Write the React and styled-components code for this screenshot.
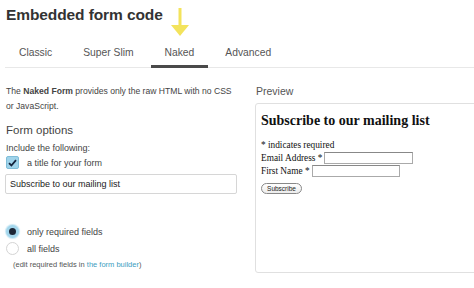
import React from 'react';
import styled, { createGlobalStyle } from 'styled-components';

const GlobalStyle = createGlobalStyle`
  html, body {
    margin: 0;
    padding: 0;
    background: #fff;
    overflow: hidden;
  }
  body {
    font-family: "Liberation Sans", Helvetica, Arial, sans-serif;
    color: #333;
  }
`;

const Page = styled.div`
  position: relative;
  width: 474px;
  height: 288px;
  padding-left: 5px;
  box-sizing: border-box;
  overflow: hidden;
`;

const Title = styled.h1`
  margin: 0;
  padding-top: 5px;
  padding-left: 1px;
  font-size: 15.5px;
  line-height: 20px;
  font-weight: bold;
  letter-spacing: -0.1px;
  color: #333;
`;

const Arrow = styled.svg`
  position: absolute;
  left: 169px;
  top: 6px;
`;

const TabBar = styled.div`
  display: flex;
  gap: 3px;
  margin-top: 14px;
  border-bottom: 1px solid #e8e8e8;
`;

const Tab = styled.div`
  padding: 7px 14px ${p => (p.$active ? '5px' : '8px')};
  font-size: 10.3px;
  line-height: 13px;
  color: #555;
  border-bottom: ${p => (p.$active ? '3px solid #4a4a4a' : 'none')};
  margin-bottom: ${p => (p.$active ? '-1px' : '0')};
`;

const Columns = styled.div`
  display: flex;
  gap: 18px;
  margin-top: 16px;
`;

const LeftCol = styled.div`
  width: 232px;
  flex-shrink: 0;
  display: flex;
  flex-direction: column;
`;

const RightCol = styled.div`
  width: 240px;
  flex-shrink: 0;
  display: flex;
  flex-direction: column;
`;

const Desc = styled.p`
  margin: 0;
  padding-left: 1px;
  font-size: 8.6px;
  line-height: 14.5px;
  color: #444;
  white-space: nowrap;
`;

const SectionTitle = styled.h3`
  margin: 10px 0 0;
  padding-left: 1px;
  font-size: 11.5px;
  line-height: 14px;
  font-weight: normal;
  color: #444;
`;

const SmallLabel = styled.div`
  margin-top: 5px;
  padding-left: 1px;
  font-size: 9px;
  line-height: 12px;
  color: #444;
`;

const OptionRow = styled.label`
  display: flex;
  align-items: center;
  gap: 8px;
  height: 13px;
  margin-top: ${p => p.$mt || 0}px;
  padding-left: 1px;
  font-size: 9px;
  color: #444;
`;

const Check = styled.span`
  width: 13px;
  height: 13px;
  box-sizing: border-box;
  border-radius: 2px;
  background: #9fd3ea;
  border: 1px solid #7fbdd8;
  display: flex;
  align-items: center;
  justify-content: center;
`;

const Radio = styled.span`
  width: 13px;
  height: 13px;
  box-sizing: border-box;
  border-radius: 50%;
  background: ${p => (p.$checked ? '#1c2636' : '#fff')};
  border: ${p => (p.$checked ? '3px solid #a3d6ec' : '1px solid #d4d4d4')};
  box-shadow: ${p => (p.$checked ? '0 0 1px 1px #cbe8f4' : 'none')};
`;

const TextInput = styled.div`
  margin-top: 5px;
  height: 20px;
  box-sizing: border-box;
  border: 1px solid #d6d6d6;
  border-radius: 2px;
  padding: 0 4px;
  display: flex;
  align-items: center;
  font-size: 9px;
  color: #222;
`;

const Note = styled.div`
  margin-top: 5px;
  padding-left: 8px;
  font-size: 7.5px;
  line-height: 10px;
  color: #555;
`;

const Link = styled.a`
  color: #3d9ec0;
  text-decoration: none;
`;

const PreviewLabel = styled.div`
  padding-left: 1px;
  font-size: 10.5px;
  line-height: 14px;
  color: #555;
`;

const PreviewBox = styled.div`
  margin-top: 5px;
  height: 170px;
  box-sizing: border-box;
  border: 1.5px solid #e0e0e0;
  border-radius: 3px;
  padding: 0 5px;
  font-family: "Liberation Serif", "Times New Roman", serif;
  color: #111;
`;

const PreviewHeading = styled.h2`
  margin: 9px 0 0;
  font-size: 14px;
  line-height: 16px;
  font-weight: bold;
  white-space: nowrap;
`;

const PreviewLine = styled.div`
  margin-top: ${p => p.$mt || 0}px;
  font-size: 9.3px;
  line-height: 12px;
`;

const FieldRow = styled.div`
  display: flex;
  align-items: center;
  gap: 2px;
  height: 13px;
  font-size: 9.3px;
`;

const FieldBox = styled.span`
  display: inline-block;
  width: ${p => p.$w}px;
  height: 12px;
  box-sizing: border-box;
  border: 1px solid #aaa;
  border-top-color: #888;
  background: #fff;
`;

const SubmitButton = styled.span`
  display: inline-flex;
  align-items: center;
  justify-content: center;
  margin-top: 2px;
  width: 41px;
  height: 11px;
  box-sizing: border-box;
  border: 1px solid #888;
  border-radius: 6px;
  background: linear-gradient(#fff, #ececec);
  font-family: "Liberation Sans", Helvetica, Arial, sans-serif;
  font-size: 6.5px;
  color: #222;
`;

const tabs = ['Classic', 'Super Slim', 'Naked', 'Advanced'];

export default function App() {
  return (
    <>
      <GlobalStyle />
      <Page>
        <Title>Embedded form code</Title>
        <Arrow width="22" height="32" viewBox="0 0 22 32">
          <line x1="11" y1="2" x2="11" y2="21" stroke="#f3e35c" strokeWidth="3" />
          <polygon points="2,19 20,19 11,30" fill="#f3e35c" />
        </Arrow>
        <TabBar>
          {tabs.map(t => (
            <Tab key={t} $active={t === 'Naked'}>{t}</Tab>
          ))}
        </TabBar>
        <Columns>
          <LeftCol>
            <Desc>
              The <b>Naked Form</b> provides only the raw HTML with no CSS
              <br />
              or JavaScript.
            </Desc>
            <SectionTitle>Form options</SectionTitle>
            <SmallLabel>Include the following:</SmallLabel>
            <OptionRow $mt={2}>
              <Check>
                <svg width="9" height="8" viewBox="0 0 9 8">
                  <path d="M1 4.2 L3.4 6.5 L8 1.2" fill="none" stroke="#13223a" strokeWidth="1.8" />
                </svg>
              </Check>
              a title for your form
            </OptionRow>
            <TextInput>Subscribe to our mailing list</TextInput>
            <OptionRow $mt={31}>
              <Radio $checked />
              only required fields
            </OptionRow>
            <OptionRow $mt={4}>
              <Radio />
              all fields
            </OptionRow>
            <Note>
              (edit required fields in <Link href="#">the form builder</Link>)
            </Note>
          </LeftCol>
          <RightCol>
            <PreviewLabel>Preview</PreviewLabel>
            <PreviewBox>
              <PreviewHeading>Subscribe to our mailing list</PreviewHeading>
              <PreviewLine $mt={10}>* indicates required</PreviewLine>
              <FieldRow>
                Email Address *
                <FieldBox $w={89} />
              </FieldRow>
              <FieldRow>
                First Name *
                <FieldBox $w={88} />
              </FieldRow>
              <SubmitButton>Subscribe</SubmitButton>
            </PreviewBox>
          </RightCol>
        </Columns>
      </Page>
    </>
  );
}
